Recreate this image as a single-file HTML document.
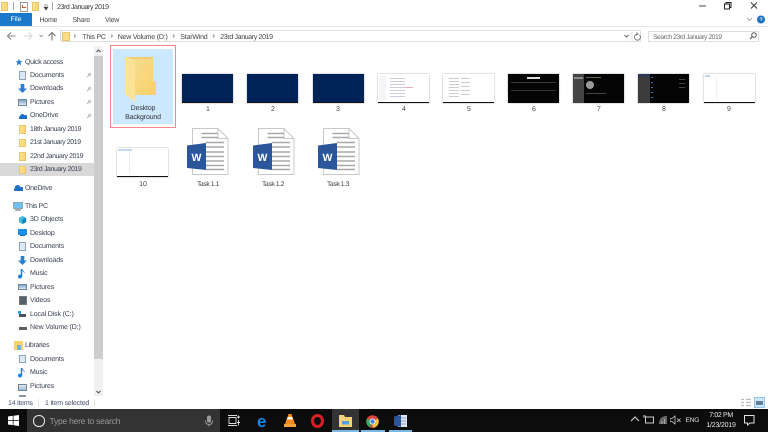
<!DOCTYPE html>
<html><head><meta charset="utf-8"><title>23rd January 2019</title>
<style>
*{box-sizing:border-box}
html,body{margin:0;padding:0;background:#fff}
#w{position:relative;width:768px;height:432px;overflow:hidden;background:#fff;font-family:"Liberation Sans",sans-serif;font-size:7px;color:#333;filter:blur(.3px);text-rendering:geometricPrecision}
#w div,#w span,#w svg{position:absolute}
.t{white-space:nowrap;line-height:10px;margin-top:1.5px}
.n{left:30px;color:#3a4250;letter-spacing:-.15px;margin-top:2.2px}
.d{font-size:6.9px;letter-spacing:-.35px}
.h{left:25px;color:#3a4250;letter-spacing:-.3px;margin-top:2.2px}
.c{text-align:center;color:#444;width:66px;margin-top:1.5px;line-height:10px}
.k2{font-size:6.8px;letter-spacing:-.4px}
.th{width:51px;height:29px;background:#002458;box-shadow:0 0 1.5px #999;overflow:hidden}
.th .b{left:0;right:0;bottom:0;height:1.5px;background:#111}
.th.w{background:#fff}
.th.k{background:#050505}
.fi{width:7px;height:8.500px;background:linear-gradient(90deg,#fbe08f,#fdd56c);border:.5px solid #e6c670}
.a{top:31px;color:#3f3f3f;letter-spacing:-.2px}
</style></head><body><div id="w">

<!-- title bar -->
<div class="fi" style="left:1px;top:2px;width:7px;height:9px"></div>
<div style="left:13px;top:2px;width:1px;height:8px;background:#aaa"></div>
<div style="left:20px;top:2px;width:8px;height:10px;border:1px solid #999;background:#fff"></div>
<div style="left:22px;top:5px;width:4px;height:3px;border-bottom:1px solid #d2572c;border-left:1px solid #d2572c"></div>
<div class="fi" style="left:32px;top:2px;width:7px;height:9px"></div>
<svg style="left:43px;top:4px" width="6" height="7"><path d="M1 1h4M1 3h4l-2 3z" fill="#444" stroke="#444" stroke-width=".6"/></svg>
<div style="left:52px;top:2px;width:1px;height:8px;background:#aaa"></div>
<div class="t" style="left:57px;top:1px;color:#333;letter-spacing:-.4px">23rd January 2019</div>
<svg style="left:696px;top:0" width="72" height="12"><path d="M3 6h7" stroke="#444" fill="none"/><path d="M28.500 4h5v5h-5zM30 4V2.500h5v5h-1.500" stroke="#222" fill="none"/><path d="M55 2.500l6 6M61 2.500l-6 6" stroke="#333" fill="none"/></svg>

<!-- tabs -->
<div class="t" style="left:0;top:13px;margin-top:0;width:32px;height:13px;line-height:13px;background:#1979ca;color:#fff;text-align:center;font-size:6.8px">File</div>
<div class="t" style="left:39.500px;top:14px;color:#444;letter-spacing:-.25px">Home</div>
<div class="t" style="left:72.500px;top:14px;color:#444;letter-spacing:-.25px">Share</div>
<div class="t" style="left:105px;top:14px;color:#444;letter-spacing:-.25px">View</div>
<div style="left:0;top:26px;width:768px;height:1px;background:#e6e6e6"></div>
<svg style="left:745px;top:14px" width="22" height="11"><path d="M2 4l2.500 2.500L7 4" stroke="#aaa" fill="none"/><circle cx="16" cy="5.500" r="4" fill="#1a70c5"/><path d="M14.800 4.500q1.200-1.600 2.400 0q0 .8-1.200 1.300v.8" stroke="#fff" stroke-width=".7" fill="none"/></svg>

<!-- nav -->
<svg style="left:6px;top:31px" width="52" height="11"><path d="M1.500 5h8M5 1.500L1.500 5 5 8.500" stroke="#8a8a8a" fill="none" stroke-width="1.100"/><path d="M18 5h8M22.500 1.500L26 5l-3.500 3.500" stroke="#d8d8d8" fill="none" stroke-width="1.100"/><path d="M33.500 4l1.700 1.700L37 4" stroke="#999" fill="none"/><path d="M46 9.500V1.500M42.500 5L46 1.500 49.500 5" stroke="#777" fill="none" stroke-width="1.100"/></svg>
<div style="left:60px;top:30px;width:581px;height:12px;border:1px solid #dedede"></div>
<div style="left:62px;top:32px;width:8px;height:9px;background:#fcdc82;border:.5px solid #e8c76f"></div>
<svg style="left:70px;top:30px" width="220" height="12"><path d="M4 4.500l1.500 1.500L4 7.500M41 4.500l1.500 1.500L41 7.500M103 4.500l1.500 1.500L103 7.500M143 4.500l1.500 1.500L143 7.500" stroke="#666" fill="none" stroke-width=".7"/></svg>
<div class="t a" style="left:82.300px">This PC</div>
<div class="t a" style="left:117.700px">New Volume (D:)</div>
<div class="t a" style="left:180.300px">StarWind</div>
<div class="t a" style="left:220.300px;letter-spacing:-.35px">23rd January 2019</div>
<svg style="left:623px;top:31px" width="20" height="11"><path d="M1.500 4l2 2 2-2" stroke="#666" fill="none"/><path d="M9 1v9" stroke="#e2e2e2"/><path d="M16.500 4a3 3 0 1 1-2.500-.800M13.500 1.500L15 3.200 13 4" stroke="#666" fill="none" stroke-width=".8"/></svg>
<div style="left:648px;top:30.500px;width:111px;height:11.500px;border:1px solid #dedede"></div>
<div class="t" style="left:653px;top:31px;color:#6d6d6d;font-size:6.800px;letter-spacing:-.48px">Search 23rd January 2019</div>
<svg style="left:749px;top:31px" width="9" height="10"><circle cx="5" cy="4" r="2.300" stroke="#555" fill="none"/><path d="M3.200 5.800L1 8" stroke="#555" stroke-width="1.100"/></svg>

<!-- sidebar -->
<div style="left:0;top:163px;width:94px;height:13px;background:#d9d9d9"></div>
<div style="left:94px;top:46px;width:9px;height:350px;background:#f0f0f0"></div>
<div style="left:94px;top:56px;width:9px;height:303px;background:#cdcdcd"></div>
<svg style="left:94px;top:47px" width="9" height="8"><path d="M2.500 5L4.500 3l2 2" stroke="#555" fill="none" stroke-width="1.100"/></svg>
<svg style="left:94px;top:388px" width="9" height="8"><path d="M2.500 3L4.500 5l2-2" stroke="#555" fill="none" stroke-width="1.100"/></svg>

<svg style="left:15px;top:58px" width="8" height="8" viewBox="0 0 12 12"><path d="M6 1l1.500 3.500L11 5 8.400 7.200 9.200 11 6 9 2.800 11 3.600 7.200 1 5l3.500-.5z" fill="#2f80d0"/></svg>
<div class="t h" style="top:55.500px">Quick access</div>

<div style="left:19px;top:71px;width:7px;height:8.500px;background:#dfe8f2;border:.5px solid #8fa3b8"></div>
<div class="t n" style="top:68.500px">Documents</div>
<svg style="left:18px;top:84px" width="9" height="10" viewBox="0 0 10 11"><path d="M3 0h4v5h3L5 10 0 5h3z" fill="#2a7fd5"/></svg>
<div class="t n" style="top:82px">Downloads</div>
<div style="left:18px;top:99px;width:8.500px;height:6.500px;background:linear-gradient(#7fa6c9,#dfe8ef);border:.5px solid #6f8598"></div>
<div class="t n" style="top:95.500px">Pictures</div>
<svg style="left:18px;top:112.500px" width="9" height="6.500" viewBox="0 0 10 7"><path d="M2 7a2 2 0 0 1 0-3.500 3 3 0 0 1 5.500-1A2.300 2.300 0 0 1 10 7z" fill="#1d6fc4"/></svg>
<div class="t n" style="top:109px">OneDrive</div>
<svg style="left:86px;top:72px" width="6" height="6"><path d="M1 5l2-2M2 1.500l2.500 2.500M3.500 .8l1.700 1.700" stroke="#a0a0a0" stroke-width=".8"/></svg>
<svg style="left:86px;top:85.500px" width="6" height="6"><path d="M1 5l2-2M2 1.500l2.500 2.500M3.500 .8l1.700 1.700" stroke="#a0a0a0" stroke-width=".8"/></svg>
<svg style="left:86px;top:99px" width="6" height="6"><path d="M1 5l2-2M2 1.500l2.500 2.500M3.500 .8l1.700 1.700" stroke="#a0a0a0" stroke-width=".8"/></svg>
<svg style="left:86px;top:112.500px" width="6" height="6"><path d="M1 5l2-2M2 1.500l2.500 2.500M3.500 .8l1.700 1.700" stroke="#a0a0a0" stroke-width=".8"/></svg>

<div class="fi" style="left:19px;top:125px"></div><div class="t n d" style="top:122.500px">18th January 2019</div>
<div class="fi" style="left:19px;top:138.500px"></div><div class="t n d" style="top:136px">21st January 2019</div>
<div class="fi" style="left:19px;top:152px"></div><div class="t n d" style="top:149.500px">22nd January 2019</div>
<div class="fi" style="left:19px;top:165.500px"></div><div class="t n d" style="top:163px">23rd January 2019</div>

<svg style="left:13px;top:184.500px" width="10" height="6.500" viewBox="0 0 11 7"><path d="M2 7a2 2 0 0 1 0-3.500 3 3 0 0 1 6-1A2.300 2.300 0 0 1 11 7z" fill="#1d6fc4"/></svg>
<div class="t h" style="top:182px">OneDrive</div>

<div style="left:13px;top:202px;width:10px;height:7px;background:#6fc0ee;border:.5px solid #8aa"></div>
<div style="left:15px;top:209px;width:6px;height:1.500px;background:#aab"></div>
<div class="t h" style="top:199.500px">This PC</div>

<svg style="left:18px;top:215px" width="9" height="9" viewBox="0 0 10 10"><path d="M1 3l4-2 4 2v5L5 10 1 8z" fill="#45b8dc"/><path d="M5 5l4-2v5l-4 2z" fill="#0e83b2"/></svg>
<div class="t n" style="top:213px">3D Objects</div>
<div style="left:18px;top:229px;width:9px;height:6px;background:#1d8fe6"></div>
<div style="left:20px;top:235px;width:5px;height:1px;background:#1b6fb5"></div>
<div class="t n" style="top:226.500px">Desktop</div>
<div style="left:19px;top:242px;width:7px;height:8.500px;background:#dfe8f2;border:.5px solid #8fa3b8"></div>
<div class="t n" style="top:240px">Documents</div>
<svg style="left:18px;top:255.500px" width="9" height="10" viewBox="0 0 10 11"><path d="M3 0h4v5h3L5 10 0 5h3z" fill="#2a7fd5"/></svg>
<div class="t n" style="top:253.500px">Downloads</div>
<svg style="left:18px;top:269px" width="8" height="11"><path d="M4 0v7.500a2 1.700 0 1 1-1-1.400V0zM4 0q.5 2.500 3 4" fill="#1f7fe0" stroke="#1f7fe0" stroke-width=".5"/></svg>
<div class="t n" style="top:267px">Music</div>
<div style="left:18px;top:283.500px;width:8.500px;height:6.500px;background:linear-gradient(#7fa6c9,#dfe8ef);border:.5px solid #6f8598"></div>
<div class="t n" style="top:280.500px">Pictures</div>
<div style="left:18.500px;top:296px;width:8px;height:9px;background:#54606e;border:1px solid #777"></div>
<div class="t n" style="top:294px">Videos</div>
<div style="left:19px;top:313.500px;width:7px;height:3px;background:#48525c"></div>
<div style="left:18px;top:310.500px;width:3px;height:3px;background:#29a0e0"></div>
<div class="t n" style="top:307.500px">Local Disk (C:)</div>
<div style="left:19px;top:327px;width:8px;height:3px;background:#5a5f66"></div>
<div class="t n" style="top:321px">New Volume (D:)</div>

<div style="left:13.500px;top:341px;width:9px;height:9px;background:#f8d26a"></div>
<div style="left:16.500px;top:345px;width:4.500px;height:5px;background:#6fb4e8"></div>
<div class="t h" style="top:339px">Libraries</div>
<div style="left:19px;top:354.500px;width:7px;height:8.500px;background:#dfe8f2;border:.5px solid #8fa3b8"></div>
<div class="t n" style="top:352.500px">Documents</div>
<svg style="left:18px;top:368px" width="8" height="11"><path d="M4 0v7.500a2 1.700 0 1 1-1-1.400V0zM4 0q.5 2.500 3 4" fill="#1f7fe0" stroke="#1f7fe0" stroke-width=".5"/></svg>
<div class="t n" style="top:366px">Music</div>
<div style="left:18px;top:384px;width:8.500px;height:6.500px;background:linear-gradient(#dfe8ef,#9fbbd2);border:.5px solid #6f8598"></div>
<div class="t n" style="top:379.500px">Pictures</div>
<div style="left:19px;top:395px;width:7px;height:1.500px;background:#8a97a5"></div>

<!-- selected -->
<div style="left:110px;top:45px;width:66px;height:83px;border:1px solid #f08a8a"></div>
<div style="left:113px;top:49px;width:60px;height:75px;background:#cce8ff"></div>
<svg style="left:125px;top:56px" width="31" height="47"><defs><linearGradient id="g" x1="0" y1="0" x2="1" y2="1"><stop offset="0" stop-color="#f7dc8e"/><stop offset="1" stop-color="#f8d068"/></linearGradient></defs><path d="M0 1H28V25H31V39H10V4z" fill="#f1cd6e"/><path d="M10 3H28V25H31V39H10z" fill="url(#g)"/><path d="M0 1L10 4V46L0 38z" fill="#fae296"/></svg>
<div class="c" style="left:110px;top:103.500px;line-height:8.500px;color:#333;letter-spacing:-.15px">Desktop<br>Background</div>

<!-- thumbnails -->
<div class="th" style="left:182px;top:74px"><div class="b"></div></div>
<div class="th" style="left:247px;top:74px"><div class="b"></div></div>
<div class="th" style="left:312.500px;top:74px"><div class="b"></div></div>
<div class="th w" style="left:377.500px;top:74px"><div style="left:1px;top:2px;width:7px;height:24px;background:#f3f5f7"></div><div style="left:12px;top:4px;width:15px;height:21px;background:repeating-linear-gradient(#ccd 0 1px,#fff 1px 3px)"></div><div style="left:27px;top:13px;width:8px;height:1px;background:#eab0b0"></div><div class="b"></div></div>
<div class="th w" style="left:443px;top:74px"><div style="left:6px;top:4px;width:10px;height:21px;background:repeating-linear-gradient(#ccc 0 1px,#fff 1px 3px)"></div><div style="left:18px;top:4px;width:9px;height:20px;background:repeating-linear-gradient(#ccc 0 1px,#fff 1px 4px)"></div><div class="b"></div></div>
<div class="th k" style="left:508px;top:74px"><div style="left:19px;top:3px;width:13px;height:1.500px;background:#ddd"></div><div style="left:3px;top:8px;width:45px;height:1px;background:#3a3a3a"></div><div style="left:3px;top:16px;width:45px;height:1px;background:#333"></div></div>
<div class="th k" style="left:573px;top:74px"><div style="left:0;top:0;width:11px;height:29px;background:#444"></div><div style="left:1px;top:3px;width:9px;height:2px;background:#8a8a8a"></div><div style="left:13px;top:7px;width:8px;height:8px;border-radius:50%;background:#999"></div><div style="left:13px;top:3px;width:15px;height:1px;background:#665"></div><div style="left:13px;top:19px;width:20px;height:1px;background:#444"></div></div>
<div class="th k" style="left:638px;top:74px"><div style="left:0;top:0;width:12px;height:29px;background:#3c3c3c"></div><div style="left:0;top:0;width:12px;height:3px;background:#2d3a55"></div><div style="left:13px;top:3px;width:2px;height:22px;background:repeating-linear-gradient(#3a76b8 0 1px,#000 1px 5px)"></div><div style="left:41px;top:5px;width:6px;height:10px;background:repeating-linear-gradient(#444 0 1px,#000 1px 4px)"></div></div>
<div class="th w" style="left:703.500px;top:74px"><div style="left:1px;top:1px;width:5px;height:2px;background:#bcd4ea"></div><div style="left:12px;top:3px;width:1px;height:23px;background:#eee"></div><div class="b"></div></div>
<div class="th w" style="left:116.500px;top:148px"><div style="left:1px;top:1px;width:14px;height:2px;background:#c4d8ea"></div><div style="left:12px;top:3px;width:1px;height:23px;background:#eee"></div><div class="b"></div></div>

<div class="c" style="left:175px;top:103.500px">1</div>
<div class="c" style="left:240px;top:103.500px">2</div>
<div class="c" style="left:305px;top:103.500px">3</div>
<div class="c" style="left:371px;top:103.500px">4</div>
<div class="c" style="left:436px;top:103.500px">5</div>
<div class="c" style="left:501px;top:103.500px">6</div>
<div class="c" style="left:566px;top:103.500px">7</div>
<div class="c" style="left:631px;top:103.500px">8</div>
<div class="c" style="left:696px;top:103.500px">9</div>
<div class="c" style="left:110px;top:178px">10</div>

<!-- word docs -->
<svg style="left:187px;top:128px" width="42" height="48"><path d="M5.500.500H31L41 10.500V46.500H5.500z" fill="#fff" stroke="#c8c8c8"/><path d="M31 .500V10.500H41" fill="none" stroke="#c8c8c8"/><path d="M14.500 5.500H31M14.500 9.500H31M19 14.500H37M19 19H37M19 24H37M19 28.500H37M19 33H37M19 37.500H37M19 41.500H37" stroke="#a8a8a8" stroke-width="1.500"/><path d="M0 17.500L19 15V42L0 40z" fill="#2b579a"/><text x="4.500" y="33" font-family="Liberation Sans" font-size="10.500" font-weight="bold" fill="#fff">W</text></svg>
<svg style="left:252.500px;top:128px" width="42" height="48"><path d="M5.500.500H31L41 10.500V46.500H5.500z" fill="#fff" stroke="#c8c8c8"/><path d="M31 .500V10.500H41" fill="none" stroke="#c8c8c8"/><path d="M14.500 5.500H31M14.500 9.500H31M19 14.500H37M19 19H37M19 24H37M19 28.500H37M19 33H37M19 37.500H37M19 41.500H37" stroke="#a8a8a8" stroke-width="1.500"/><path d="M0 17.500L19 15V42L0 40z" fill="#2b579a"/><text x="4.500" y="33" font-family="Liberation Sans" font-size="10.500" font-weight="bold" fill="#fff">W</text></svg>
<svg style="left:317.500px;top:128px" width="42" height="48"><path d="M5.500.500H31L41 10.500V46.500H5.500z" fill="#fff" stroke="#c8c8c8"/><path d="M31 .500V10.500H41" fill="none" stroke="#c8c8c8"/><path d="M14.500 5.500H31M14.500 9.500H31M19 14.500H37M19 19H37M19 24H37M19 28.500H37M19 33H37M19 37.500H37M19 41.500H37" stroke="#a8a8a8" stroke-width="1.500"/><path d="M0 17.500L19 15V42L0 40z" fill="#2b579a"/><text x="4.500" y="33" font-family="Liberation Sans" font-size="10.500" font-weight="bold" fill="#fff">W</text></svg>
<div class="c k2" style="left:175px;top:178px">Task 1.1</div>
<div class="c k2" style="left:240px;top:178px">Task 1.2</div>
<div class="c k2" style="left:305px;top:178px">Task 1.3</div>

<!-- status -->
<div class="t" style="left:8px;top:397px;color:#44506a;letter-spacing:-.2px">14 items</div>
<div style="left:38px;top:399px;width:1px;height:8px;background:#e2e2e2"></div>
<div class="t" style="left:45px;top:397px;color:#44506a;letter-spacing:-.2px">1 item selected</div>
<div style="left:94px;top:399px;width:1px;height:8px;background:#e2e2e2"></div>
<svg style="left:741px;top:398px" width="11" height="10"><path d="M0 1.500h3M0 4.500h3M0 7.500h3M5 1.500h5M5 4.500h5M5 7.500h5" stroke="#bbb" stroke-width="1.200"/></svg>
<div style="left:754px;top:397px;width:11px;height:11px;background:#cfe6f7;border:1px solid #8cc4ea"></div>
<div style="left:756px;top:401px;width:7px;height:4px;background:#5f7f9a"></div>

<!-- taskbar -->
<div style="left:0;top:409px;width:768px;height:23px;background:#0c0c0c"></div>
<div style="left:27px;top:409px;width:193px;height:23px;background:#333"></div>
<svg style="left:8px;top:415px" width="11" height="11"><path d="M0 1.500L4.800.800v4.200H0zM5.500.700L11 0v5H5.500zM0 5.800h4.800v4.300L0 9.500zM5.500 5.800H11V11l-5.500-.8z" fill="#fff"/></svg>
<div style="left:33px;top:415px;width:11.500px;height:11.500px;border-radius:50%;border:1.500px solid #e8e8e8"></div>
<div class="t" style="left:49.500px;top:414.500px;font-size:8.500px;letter-spacing:-.23px;color:#9a9a9a">Type here to search</div>
<svg style="left:204px;top:415px" width="10" height="12"><rect x="3" y="0.500" width="4" height="7" rx="1.800" fill="#999"/><path d="M1.500 5.500q0 4 3.500 4t3.500-4M5 9.500v2" stroke="#999" fill="none"/></svg>
<svg style="left:228px;top:415px" width="13" height="11"><path d="M1 2.500h7v6H1zM0 .500h9M0 10.500h9M10.500 .500v3M10.500 5v5.500M12 2h-3M12 7.500h-3" stroke="#ddd" fill="none" stroke-width=".9"/></svg>
<div class="t" style="left:257px;top:411px;font-size:17px;line-height:17px;color:#1a84e0;font-weight:bold">e</div>
<svg style="left:284px;top:413px" width="12" height="15"><path d="M4.500 1h3l3.500 10H1z" fill="#f08a1a"/><path d="M3.800 4h4.400l.8 2.500H3z" fill="#fff"/><path d="M0 11h12v3H0z" fill="#f3a33a"/></svg>
<div style="left:311px;top:414px;width:13px;height:14px;border-radius:50%;border:3.500px solid #d81f26"></div>
<div style="left:332px;top:409px;width:27px;height:23px;background:#333"></div>
<svg style="left:339px;top:415px" width="13" height="12"><path d="M0 0h5l1 2h7v10H0z" fill="#f6d371"/><path d="M3 6h7v3.500H3z" fill="#4aa3e0"/></svg>
<svg style="left:366px;top:415px" width="13" height="13"><circle cx="6.500" cy="6.500" r="6.300" fill="#d9453a"/><path d="M6.500 6.500L12 3.500A6.300 6.300 0 0 1 6.500 12.800z" fill="#f5c33b"/><path d="M6.500 6.500L3.800 12.200A6.300 6.300 0 0 1 1 3.500z" fill="#3ba55c"/><circle cx="6.500" cy="6.500" r="3" fill="#fff"/><circle cx="6.500" cy="6.500" r="2.200" fill="#3f82e8"/></svg>
<svg style="left:394px;top:415px" width="13" height="12"><path d="M4 0h9v12H4z" fill="#dfe6f2"/><path d="M7 3h5M7 6h5M7 9h5" stroke="#8aa0c4"/><path d="M0 1.500l7-1.500v12l-7-1.500z" fill="#2b579a"/></svg>
<div style="left:332px;top:430px;width:27px;height:2px;background:#7ab8e8"></div>
<div style="left:361px;top:430px;width:24px;height:2px;background:#7ab8e8"></div>
<div style="left:389px;top:430px;width:23px;height:2px;background:#7ab8e8"></div>

<svg style="left:630px;top:416px" width="10" height="7"><path d="M1 5l4-4 4 4" stroke="#ddd" fill="none"/></svg>
<svg style="left:643px;top:415px" width="12" height="10"><path d="M2.500 2h8v6h-8z" stroke="#ccc" fill="none"/><path d="M0 1h3M1 0v3" stroke="#ccc" stroke-width=".7"/></svg>
<svg style="left:658px;top:415px" width="10" height="10"><path d="M1 8a7 7 0 0 1 8-7v8H1z" fill="#666"/><path d="M4 9V6M6.500 9V4" stroke="#aaa"/></svg>
<svg style="left:670px;top:415px" width="12" height="10"><path d="M0 3.500h2L5 1v8L2 6.500H0z" stroke="#ccc" fill="none" stroke-width=".8"/><path d="M7 3.500l3.500 3.500M10.500 3.500L7 7" stroke="#ccc" stroke-width=".8"/></svg>
<div class="t" style="left:685.500px;top:414.500px;color:#e0e0e0;font-size:6.600px;letter-spacing:-.2px">ENG</div>
<div class="t" style="left:700px;top:409px;width:42px;text-align:center;color:#eee;letter-spacing:-.35px">7:02 PM</div>
<div class="t" style="left:700px;top:419.500px;width:42px;text-align:center;color:#eee;letter-spacing:-.2px">1/23/2019</div>
<svg style="left:744px;top:415px" width="11" height="11"><path d="M.500.500h9.500v7.500H6L3.500 10V8H.500z" stroke="#e0e0e0" fill="none"/></svg>
</div></body></html>
